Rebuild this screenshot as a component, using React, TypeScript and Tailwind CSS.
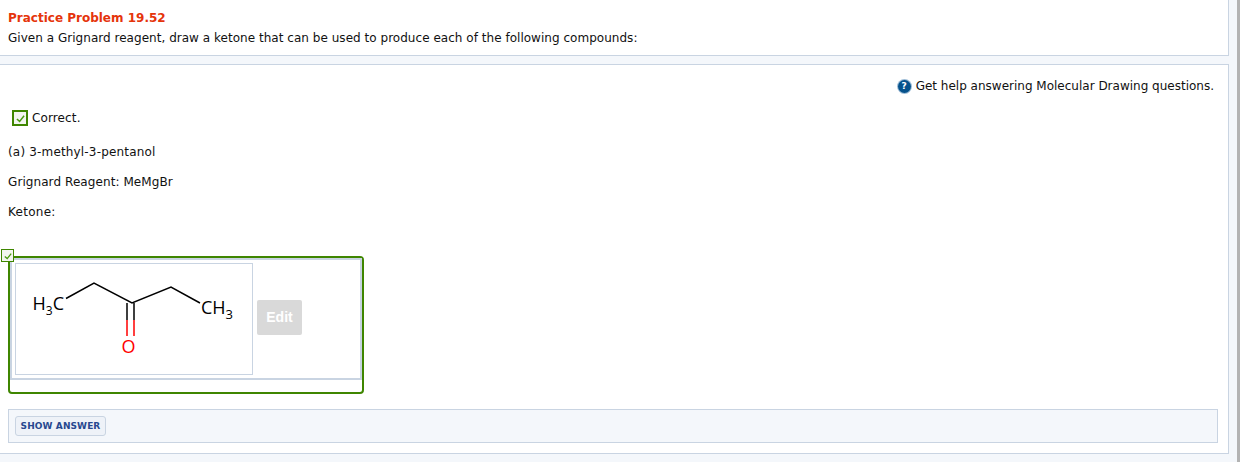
export default function App() {
  return (
    <div className="flex h-[462px] w-[1240px] overflow-hidden bg-[#f4f7fb] font-['DejaVu_Sans',Verdana,sans-serif] text-[12px] leading-[16px] text-[#111]">
      <div className="flex w-[1229px] flex-col">
        <section className="h-[56px] border-r border-b border-[#c9d4e2] bg-white pl-2 pt-[10px]">
          <h1 className="font-bold text-[#e5340b]">Practice Problem 19.52</h1>
          <p className="mt-1 tracking-[0.03px]">Given a Grignard reagent, draw a ketone that can be used to produce each of the following compounds:</p>
        </section>
        <section className="mt-2 flex h-[390px] flex-col border-t border-r border-b border-[#c9d4e2] bg-white pl-2 pr-[10px]">
          <div className="mt-[13px] flex items-center justify-end gap-[5px] pr-1">
            <span className="flex h-[13px] w-[13px] items-center justify-center rounded-full bg-[#05528c] text-[9px] font-bold leading-none text-white ring-1 ring-[#9dbcd6]">?</span>
            <span>Get help answering Molecular Drawing questions.</span>
          </div>
          <div className="mt-[16px] flex items-center gap-1 pl-1">
            <span className="flex h-4 w-4 items-center justify-center border-2 border-[#3f8600] bg-[#f3f6f0]">
              <Check className="h-[9px] w-[9px]" />
            </span>
            <span className="tracking-[0.12px]">Correct.</span>
          </div>
          <p className="mt-[18px] tracking-[0.17px]">(a) 3-methyl-3-pentanol</p>
          <p className="mt-[14px] tracking-[0.08px]">Grignard Reagent: MeMgBr</p>
          <p className="mt-[14px] tracking-[0.28px]">Ketone:</p>
          <div className="relative mt-[36px] h-[138px] w-[356px] rounded-[4px] border-2 border-[#3f8600]">
            <span className="absolute left-[-9px] top-[-9px] z-10 flex h-[13px] w-[13px] items-center justify-center border border-[#3f8600] bg-[#f3f6f0]">
              <Check className="h-[8px] w-[8px]" />
            </span>
            <div className="flex h-[122px] items-center border-2 border-[#c9d4e2] py-[3px] pl-[3px]">
              <div className="h-[112px] w-[238px] border border-[#c9d4e2] bg-white">
                <Molecule />
              </div>
              <button className="mb-1 ml-1 flex h-[35px] w-[45px] items-center justify-center rounded-[2px] bg-[#d9d9d9] font-['Liberation_Sans',sans-serif] text-[14px] font-bold text-white">Edit</button>
            </div>
          </div>
          <div className="mt-[15px] flex h-[34px] items-center border border-[#c9d4e2] bg-[#f4f7fb] pl-[6px]">
            <button className="flex h-[20px] w-[91px] items-center justify-center rounded-[3px] border border-[#c9d4e2] bg-[#eef2f8] text-[9px] font-bold tracking-[0.1px] text-[#27488f]">SHOW ANSWER</button>
          </div>
        </section>
      </div>
      <div className="ml-auto w-[3px] bg-[#b3b3b3]" />
    </div>
  );
}

function Check({ className }: { className: string }) {
  return (
    <svg viewBox="0 0 10 10" className={className} fill="none" stroke="#4a9a10" strokeWidth="1.6">
      <path d="M1 5.5 L4 8.2 L9 2" />
    </svg>
  );
}

function Molecule() {
  return (
    <svg viewBox="16 264 236 110" className="h-full w-full" fontFamily="'Open Sans', sans-serif">
      <path d="M66 298.5 L94 283 L132 303 L171 287 L200 303" fill="none" stroke="#000" strokeWidth="1.5" />
      <path d="M127 303 V320 M134 303 V320" stroke="#000" strokeWidth="1.5" />
      <path d="M127 320 V336 M134 320 V336" stroke="#f00" strokeWidth="1.5" />
      <text x="32.5" y="310" fontSize="18" fill="#000">H<tspan fontSize="12" dy="5">3</tspan><tspan dy="-5">C</tspan></text>
      <text x="201" y="314" fontSize="18" fill="#000">CH<tspan fontSize="13" dy="5">3</tspan></text>
      <text x="121.5" y="353" fontSize="18" fill="#f00">O</text>
    </svg>
  );
}
